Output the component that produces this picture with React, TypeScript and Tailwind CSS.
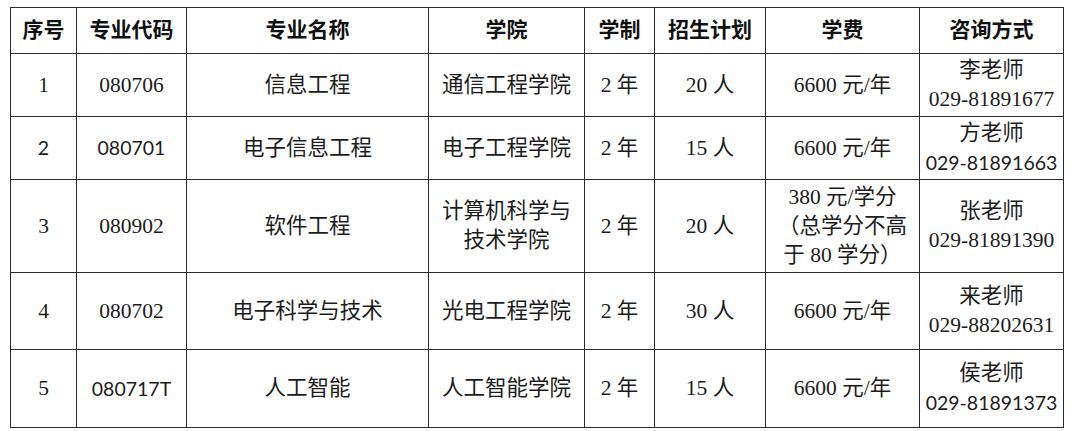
import React from "react";

const serif = "font-['Liberation_Serif','Noto_Sans_CJK_SC',serif]";
const sans = "font-['Lato','Noto_Sans_CJK_SC',sans-serif] text-[19.5px]";

type Row = {
  no: React.ReactNode;
  code: React.ReactNode;
  name: string;
  college: React.ReactNode;
  years: string;
  plan: string;
  fee: React.ReactNode;
  contact: string;
  phone: React.ReactNode;
  h: string;
};

const S = ({ children }: { children: React.ReactNode }) => <span className={sans}>{children}</span>;

const rows: Row[] = [
  { no: "1", code: "080706", name: "信息工程", college: "通信工程学院", years: "2 年", plan: "20 人", fee: "6600 元/年", contact: "李老师", phone: "029-81891677", h: "h-[63px]" },
  { no: <S>2</S>, code: <S>080701</S>, name: "电子信息工程", college: "电子工程学院", years: "2 年", plan: "15 人", fee: "6600 元/年", contact: "方老师", phone: <S>029-81891663</S>, h: "h-[63px]" },
  {
    no: "3",
    code: "080902",
    name: "软件工程",
    college: (
      <>
        计算机科学与
        <br />
        技术学院
      </>
    ),
    years: "2 年",
    plan: "20 人",
    fee: (
      <>
        380 元/学分
        <br />
        （总学分不高
        <br />
        于 80 学分）
      </>
    ),
    contact: "张老师",
    phone: "029-81891390",
    h: "h-[93px]",
  },
  { no: "4", code: "080702", name: "电子科学与技术", college: "光电工程学院", years: "2 年", plan: "30 人", fee: "6600 元/年", contact: "来老师", phone: "029-88202631", h: "h-[77px]" },
  { no: "5", code: <S>080717T</S>, name: "人工智能", college: "人工智能学院", years: "2 年", plan: "15 人", fee: "6600 元/年", contact: "侯老师", phone: <S>029-81891373</S>, h: "h-[78px]" },
];

const headers = ["序号", "专业代码", "专业名称", "学院", "学制", "招生计划", "学费", "咨询方式"];
const widths = ["w-[66px]", "w-[110px]", "w-[242px]", "w-[156px]", "w-[70px]", "w-[111px]", "w-[154px]", "w-[144px]"];

const td = "border border-[#2a2a2a] text-center align-middle p-0";

export default function App() {
  return (
    <div className="w-[1080px] h-[431px] bg-white pt-[7px] pl-[10px] overflow-hidden">
      <table className={`border-collapse table-fixed w-[1053px] text-[21.5px] leading-[29px] text-[#1c1c1c] ${serif}`}>
        <colgroup>
          {widths.map((w, i) => (
            <col key={i} className={w} />
          ))}
        </colgroup>
        <thead>
          <tr className="h-[46px]">
            {headers.map((h) => (
              <th key={h} className={`${td} font-bold text-[21px] text-[#111]`}>
                {h}
              </th>
            ))}
          </tr>
        </thead>
        <tbody>
          {rows.map((r, i) => (
            <tr key={i} className={r.h}>
              <td className={td}>{r.no}</td>
              <td className={td}>{r.code}</td>
              <td className={td}>{r.name}</td>
              <td className={td}>{r.college}</td>
              <td className={td}>{r.years}</td>
              <td className={td}>{r.plan}</td>
              <td className={td}>{r.fee}</td>
              <td className={td}>
                {r.contact}
                <br />
                {r.phone}
              </td>
            </tr>
          ))}
        </tbody>
      </table>
    </div>
  );
}
